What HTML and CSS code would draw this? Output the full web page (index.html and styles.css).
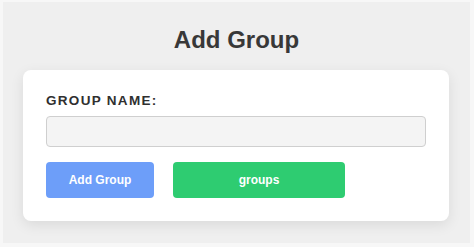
FILE: index.html
```html
<!DOCTYPE html>
<html>
<head>
<meta charset="utf-8">
<link rel="stylesheet" href="styles.css">
</head>
<body>
<div class="page">
  <h1 class="title">Add Group</h1>
  <div class="card">
    <label class="label" for="gname">GROUP NAME:</label>
    <input class="input" id="gname" type="text">
    <div class="actions">
      <button class="btn btn-blue">Add Group</button>
      <button class="btn btn-green">groups</button>
    </div>
  </div>
</div>
</body>
</html>
```
FILE: styles.css
```css
html, body {
  margin: 0;
  padding: 0;
  background: #f7f7f7;
  font-family: "Liberation Sans", Arial, sans-serif;
}
.page {
  margin: 2px 4px 0 3px;
  height: 241px;
  background: #efefef;
  padding-top: 1px;
  box-sizing: border-box;
  display: flex;
  flex-direction: column;
  align-items: center;
}
.title {
  margin: 23px 0 0 0;
  font-size: 24px;
  line-height: 28px;
  font-weight: bold;
  color: #383838;
}
.card {
  margin-top: 16px;
  margin-left: -1px;
  width: 426px;
  box-sizing: border-box;
  background: #fff;
  border-radius: 8px;
  box-shadow: 0 4px 14px rgba(0, 0, 0, 0.09);
  padding: 23px 23px 23px 23px;
  display: flex;
  flex-direction: column;
}
.label {
  font-size: 13.5px;
  font-weight: bold;
  letter-spacing: 1.3px;
  color: #2f2f2f;
  line-height: 16px;
}
.input {
  margin-top: 7px;
  height: 31px;
  box-sizing: border-box;
  border: 1px solid #cfcfcf;
  border-radius: 4px;
  background: #f4f4f4;
  width: 380px;
}
.actions {
  margin-top: 15px;
  display: flex;
  gap: 19px;
}
.btn {
  height: 36px;
  border: none;
  border-radius: 4px;
  color: #fff;
  font-family: "Liberation Sans", Arial, sans-serif;
  font-weight: bold;
  font-size: 12px;
  padding: 0;
}
.btn-blue {
  width: 108px;
  background: #6d9ef9;
}
.btn-green {
  width: 172px;
  background: #2ecc71;
}
```
